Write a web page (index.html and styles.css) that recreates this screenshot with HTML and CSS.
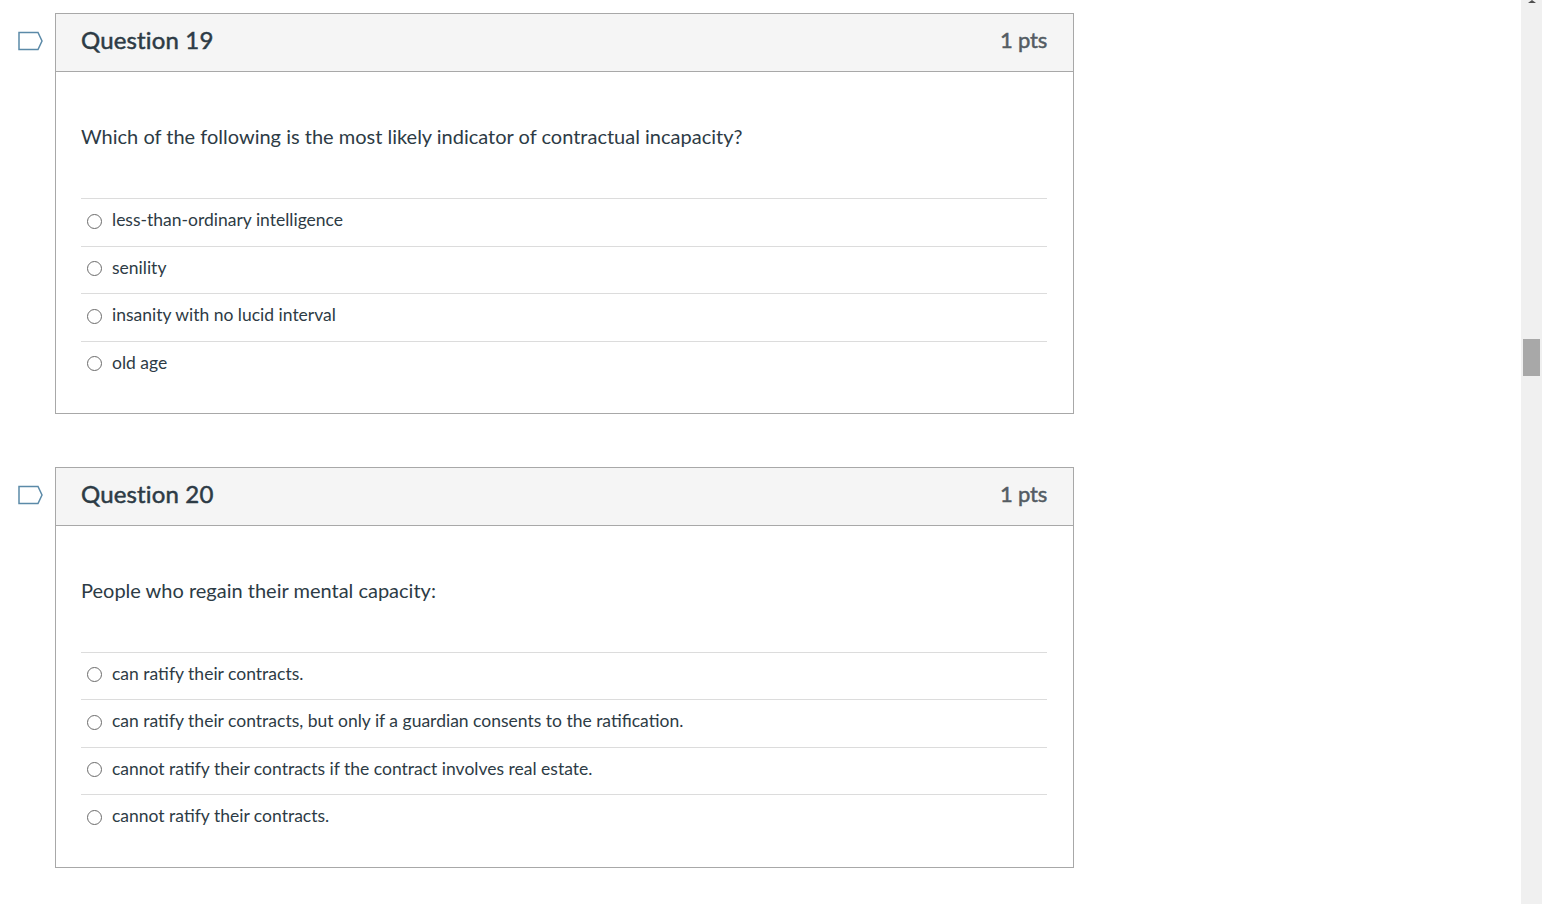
FILE: index.html
```html
<!DOCTYPE html>
<html lang="en">
<head>
<meta charset="utf-8">
<title>Quiz</title>
<link rel="stylesheet" href="styles.css">
</head>
<body>
<div class="page">
  <main class="quiz">
    <section class="entry">
      <svg class="flag" width="25" height="20" viewBox="0 0 25 20"><path d="M1 1.5H20L24 10L20 18.5H1Z" fill="#fff" stroke="#5b8aa8" stroke-width="1.5"/></svg>
      <div class="card">
        <header class="head"><h2 class="title">Question 19</h2><span class="pts">1 pts</span></header>
        <div class="body">
          <p class="text">Which of the following is the most likely indicator of contractual incapacity?</p>
          <ul class="answers">
            <li class="answer"><span class="radio"></span>less-than-ordinary intelligence</li>
            <li class="answer"><span class="radio"></span>senility</li>
            <li class="answer"><span class="radio"></span>insanity with no lucid interval</li>
            <li class="answer"><span class="radio"></span>old age</li>
          </ul>
        </div>
      </div>
    </section>
    <section class="entry">
      <svg class="flag" width="25" height="20" viewBox="0 0 25 20"><path d="M1 1.5H20L24 10L20 18.5H1Z" fill="#fff" stroke="#5b8aa8" stroke-width="1.5"/></svg>
      <div class="card">
        <header class="head"><h2 class="title">Question 20</h2><span class="pts">1 pts</span></header>
        <div class="body">
          <p class="text">People who regain their mental capacity:</p>
          <ul class="answers">
            <li class="answer"><span class="radio"></span>can ratify their contracts.</li>
            <li class="answer"><span class="radio"></span>can ratify their contracts, but only if a guardian consents to the ratification.</li>
            <li class="answer"><span class="radio"></span>cannot ratify their contracts if the contract involves real estate.</li>
            <li class="answer"><span class="radio"></span>cannot ratify their contracts.</li>
          </ul>
        </div>
      </div>
    </section>
  </main>
  <aside class="scrollbar">
    <div class="arrow"></div>
    <div class="thumb"></div>
  </aside>
</div>
</body>
</html>
```
FILE: styles.css
```css
* { box-sizing: border-box; }
html, body { margin: 0; height: 100%; overflow: hidden; }
body { background: #fff; font-family: Lato, "Liberation Sans", sans-serif; color: #2d3b45; }
.page { display: flex; height: 904px; }
.quiz { flex: 1; padding: 13.4px 0 0 18px; display: flex; flex-direction: column; gap: 52.5px; }
.entry { display: flex; align-items: flex-start; }
.flag { flex: none; margin: 18px 12px 0 0; }
.card { width: 1019px; height: 401px; border: 1px solid #a8a8a8; }
.head { height: 58px; display: flex; justify-content: space-between; align-items: center; padding: 0 26px 6px 25px; background: #f5f5f5; border-bottom: 1px solid #a8a8a8; }
.title { margin: 0; font-size: 24px; font-weight: 400; -webkit-text-stroke: 0.5px #2d3b45; letter-spacing: 0.15px; }
.pts { font-size: 22px; font-weight: 400; color: #545c63; -webkit-text-stroke: 0.5px #545c63; letter-spacing: -0.2px; }
.body { padding: 0 26px 0 25px; }
.text { margin: 0; height: 126px; padding-top: 50px; font-size: 20px; line-height: 28px; }
.answers { list-style: none; margin: 0; padding: 0; }
.answer { height: 47.5px; display: flex; align-items: center; gap: 10px; padding: 0 0 5.6px 6px; border-top: 1px solid #dcdcdc; font-size: 17.5px; }
.radio { flex: none; width: 15px; height: 15px; margin-top: 2.5px; border: 1.5px solid #6b6b6b; border-radius: 50%; background: #fff; }
.scrollbar { flex: none; width: 21px; background: #f0f0f0; padding: 0 2px; }
.arrow { width: 0; height: 0; margin: 0 auto; border: 4px solid transparent; border-top: 0; border-bottom: 3px solid #505050; }
.thumb { height: 37px; margin-top: 336px; background: #a8a8a8; }
```
